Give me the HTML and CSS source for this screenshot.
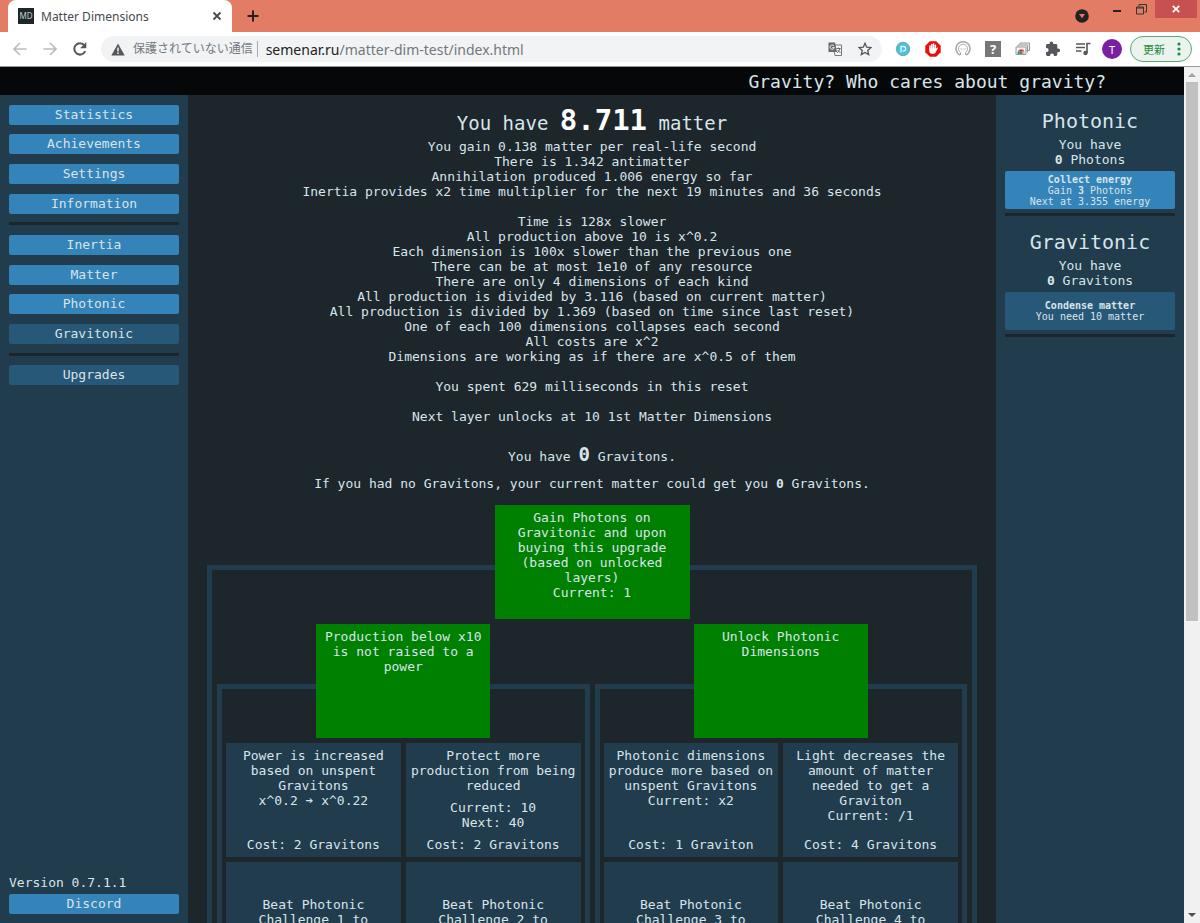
FILE: index.html
```html
<!DOCTYPE html>
<html lang="en">
<head>
  <meta charset="UTF-8">
  <meta name="viewport" content="width=device-width, initial-scale=1.0">
  <title>Matter Dimensions</title>
  <link rel="stylesheet" href="styles.css">
</head>
<body>
  <!-- Browser window -->
  <div class="tab-strip">
    <div class="tab">
      <span class="favicon">MD</span>
      <span class="tab-title">Matter Dimensions</span>
      <button class="icon-btn" aria-label="Close tab">
        <svg width="10" height="10" viewBox="0 0 10 10"><path d="M1.5 1.5l7 7M8.5 1.5l-7 7" stroke="#45494d" stroke-width="1.8"/></svg>
      </button>
    </div>
    <button class="icon-btn new-tab" aria-label="New tab">
      <svg width="12" height="12" viewBox="0 0 12 12"><path d="M6 0.5v11M0.5 6h11" stroke="#222" stroke-width="2"/></svg>
    </button>
    <div class="window-controls">
      <button class="icon-btn tab-search" aria-label="Search tabs">
        <svg width="14" height="14" viewBox="0 0 14 14"><circle cx="7" cy="7" r="6.8" fill="#222"/><path d="M4 5h6L7 9.200z" fill="#e27c64"/></svg>
      </button>
      <button class="icon-btn window-btn" aria-label="Minimize">
        <svg width="10" height="10" viewBox="0 0 10 10"><path d="M1 7h8" stroke="#222" stroke-width="2"/></svg>
      </button>
      <button class="icon-btn window-btn" aria-label="Restore">
        <svg width="11" height="11" viewBox="0 0 11 11" fill="none" stroke="#333"><path d="M3 2.5V.5h7.5V8H8.5"/><path d="M.5 3h7v7h-7zM.5 4h7"/></svg>
      </button>
      <button class="icon-btn window-close" aria-label="Close">
        <svg width="8" height="8" viewBox="0 0 8 8"><path d="M.8.8l6.4 6.4M7.2.8L.8 7.2" stroke="#fff" stroke-width="1.7"/></svg>
      </button>
    </div>
  </div>

  <div class="toolbar">
    <div class="nav-buttons">
      <button class="icon-btn" aria-label="Back">
        <svg width="16" height="16" viewBox="0 0 16 16" fill="none" stroke="#babcbe" stroke-width="1.7"><path d="M14.5 8H2.5M8 2L2 8l6 6"/></svg>
      </button>
      <button class="icon-btn" aria-label="Forward">
        <svg width="16" height="16" viewBox="0 0 16 16" fill="none" stroke="#babcbe" stroke-width="1.7"><path d="M1.5 8h12M8 2l6 6-6 6"/></svg>
      </button>
      <button class="icon-btn" aria-label="Reload">
        <svg width="16" height="16" viewBox="0 0 16 16"><path d="M13.2 10.2A5.7 5.7 0 1 1 12.4 4.3" fill="none" stroke="#54575b" stroke-width="2"/><path d="M14.3 1v6.2H8.1z" fill="#54575b"/></svg>
      </button>
    </div>
    <div class="omnibox">
      <svg width="14" height="13" viewBox="0 0 14 13"><path d="M7 .5L13.7 12.5H.3z" fill="#54575b"/><path d="M7 4.5v4M7 9.6v1.5" stroke="#f1f3f4" stroke-width="1.5"/></svg>
      <span class="insecure">保護されていない通信</span>
      <span class="url"><span class="host">semenar.ru</span>/matter-dim-test/index.html</span>
      <button class="icon-btn" aria-label="Translate">
        <svg width="14" height="14" viewBox="0 0 14 14"><path d="M5 3h8.5v10.500H7z" fill="#f8f9fa" stroke="#777"/><path d="M.5.5h6.500l2 9.500H.5z" fill="#666a6d"/><path d="M6 4a2.100 2.100 0 1 0 .3 1.600H4.400" fill="none" stroke="#fff"/><path d="M8.500 6.500h4M10.500 5.500v1M12 6.500q-1 3-3 4.500M9.500 8l3 3" fill="none" stroke="#666a6d"/></svg>
      </button>
      <button class="icon-btn" aria-label="Bookmark">
        <svg width="14" height="14" viewBox="0 0 14 14"><path d="M7 1.300l1.700 3.900 4.200.4-3.200 2.800 1 4.200L7 10.400l-3.700 2.200 1-4.200L1.100 5.600l4.200-.4z" fill="none" stroke="#54575b" stroke-width="1.300"/></svg>
      </button>
    </div>
    <div class="extensions">
      <button class="icon-btn" aria-label="Pushbullet">
        <svg width="16" height="16" viewBox="0 0 16 16"><circle cx="8" cy="8" r="6.700" fill="#42c3e0" stroke="#8b9da3"/><path d="M6 11.500V5.500h2.500a2.200 2.200 0 0 1 0 4.400H7.500" fill="none" stroke="#e6f9fd" stroke-width="1.300"/></svg>
      </button>
      <button class="icon-btn" aria-label="Blocker">
        <svg width="16" height="16" viewBox="0 0 16 16"><path d="M4.800.3h6.400l4.500 4.500v6.400l-4.500 4.500H4.800L.3 11.200V4.800z" fill="#e8100c"/><path d="M5 9V5M6.800 8V3.500M8.600 8V3M10.400 8V4.200" stroke="#fff" stroke-width="1.500" stroke-linecap="round"/><path d="M4.400 7.500h6.600l1.500-1q.8.200.2 1l-2.200 4.300q-.6 1-2 1H7q-2.600 0-2.600-2.800z" fill="#fff"/></svg>
      </button>
      <button class="icon-btn" aria-label="Extension">
        <svg width="16" height="16" viewBox="0 0 16 16" fill="none"><path d="M5 14A7 7 0 1 1 11 14" stroke="#aaa" stroke-width="1.600"/><path d="M5.500 11.500a4.500 4.500 0 1 1 5 0v2.500M5.500 11.500V14" stroke="#aaa"/><path d="M5.500 8h1.200M7.500 8h1M9.500 8h1.200" stroke="#aaa"/></svg>
      </button>
      <button class="icon-btn" aria-label="Help"><span class="help">?</span></button>
      <button class="icon-btn" aria-label="Images">
        <svg width="16" height="16" viewBox="0 0 16 16"><path d="M5 3.500V2h9.500v7.500h-1.500" fill="#eee" stroke="#999"/><path d="M3 5.500V4h9.500v7.500" fill="#eee" stroke="#999"/><path d="M1 6h10v7.500H1z" fill="#f5f5f5" stroke="#999"/><path d="M2.500 13a4 4 0 0 1 1-3.500L6 13z" fill="#2da94f"/><path d="M3 10.500a3.500 3.500 0 0 1 6.500 0z" fill="#e33b2e"/><path d="M9 10.500a4 4 0 0 1 .5 2.500H6z" fill="#fdbd00"/><circle cx="6" cy="11.500" r="1.500" fill="#3b78e7"/></svg>
      </button>
      <button class="icon-btn" aria-label="Extensions">
        <svg width="16" height="16" viewBox="0 0 16 16"><path d="M13.300 7.600h-1V4.400c0-.8-.6-1.400-1.400-1.400H8.200V2.300a1.800 1.800 0 0 0-3.600 0V3H2.400C1.600 3 1 3.600 1 4.400v2.700h.7a1.900 1.900 0 0 1 0 3.800H1v2.700c0 .8.600 1.400 1.400 1.400h2.700v-.7a1.900 1.900 0 0 1 3.800 0v.7h2c.8 0 1.400-.6 1.400-1.400v-2.400h1a1.800 1.800 0 0 0 0-3.600z" fill="#54575b"/></svg>
      </button>
      <button class="icon-btn" aria-label="Media">
        <svg width="16" height="16" viewBox="0 0 16 16"><path d="M1 3h9M1 6.500h9M1 10h5.500" stroke="#54575b" stroke-width="1.500"/><path d="M12 12V2.500h3.500" fill="none" stroke="#54575b" stroke-width="1.600"/><circle cx="10.500" cy="12" r="2.200" fill="#54575b"/></svg>
      </button>
    </div>
    <button class="icon-btn avatar" aria-label="Profile">T</button>
    <button class="update">更新
      <svg width="4" height="14" viewBox="0 0 4 14" fill="#1e8e3e"><circle cx="2" cy="2" r="1.600"/><circle cx="2" cy="7" r="1.600"/><circle cx="2" cy="12" r="1.600"/></svg>
    </button>
  </div>

  <!-- Game -->
  <div class="viewport">
    <div class="game">
      <div class="news">Gravity? Who cares about gravity?</div>
      <div class="columns">
        <nav class="sidebar">
          <button class="menu-btn">Statistics</button>
          <button class="menu-btn">Achievements</button>
          <button class="menu-btn">Settings</button>
          <button class="menu-btn">Information</button>
          <hr class="divider">
          <button class="menu-btn">Inertia</button>
          <button class="menu-btn">Matter</button>
          <button class="menu-btn">Photonic</button>
          <button class="menu-btn selected">Gravitonic</button>
          <hr class="divider">
          <button class="menu-btn selected">Upgrades</button>
          <div class="version">
            Version 0.7.1.1
            <button class="menu-btn">Discord</button>
          </div>
        </nav>

        <main class="content">
          <h1 class="matter">You have <b>8.711</b> matter</h1>
          <p>You gain 0.138 matter per real-life second<br>
            There is 1.342 antimatter<br>
            Annihilation produced 1.006 energy so far<br>
            Inertia provides x2 time multiplier for the next 19 minutes and 36 seconds</p>
          <p>Time is 128x slower<br>
            All production above 10 is x^0.2<br>
            Each dimension is 100x slower than the previous one<br>
            There can be at most 1e10 of any resource<br>
            There are only 4 dimensions of each kind<br>
            All production is divided by 3.116 (based on current matter)<br>
            All production is divided by 1.369 (based on time since last reset)<br>
            One of each 100 dimensions collapses each second<br>
            All costs are x^2<br>
            Dimensions are working as if there are x^0.5 of them</p>
          <p>You spent 629 milliseconds in this reset</p>
          <p>Next layer unlocks at 10 1st Matter Dimensions</p>
          <div class="gravitons">You have <b>0</b> Gravitons.</div>
          <div class="potential">If you had no Gravitons, your current matter could get you <b>0</b> Gravitons.</div>

          <div class="branch root">
            <button class="upgrade bought">
              <span>Gain Photons on Gravitonic and upon buying this upgrade (based on unlocked layers)<br>Current: 1</span>
            </button>
            <div class="split">
              <div class="branch">
                <button class="upgrade bought">
                  <span>Production below x10 is not raised to a power</span>
                </button>
                <div class="cards">
                  <button class="upgrade">
                    <span>Power is increased based on unspent Gravitons<br>x^0.2 <b>➔</b> x^0.22</span>
                    <span>Cost: 2 Gravitons</span>
                  </button>
                  <button class="upgrade">
                    <span>Protect more production from being reduced</span>
                    <span>Current: 10<br>Next: 40</span>
                    <span>Cost: 2 Gravitons</span>
                  </button>
                  <button class="upgrade locked">Beat Photonic Challenge 1 to</button>
                  <button class="upgrade locked">Beat Photonic Challenge 2 to</button>
                </div>
              </div>
              <div class="branch">
                <button class="upgrade bought">
                  <span>Unlock Photonic Dimensions</span>
                </button>
                <div class="cards">
                  <button class="upgrade">
                    <span>Photonic dimensions produce more based on unspent Gravitons<br>Current: x2</span>
                    <span>Cost: 1 Graviton</span>
                  </button>
                  <button class="upgrade">
                    <span>Light decreases the amount of matter needed to get a Graviton<br>Current: /1</span>
                    <span>Cost: 4 Gravitons</span>
                  </button>
                  <button class="upgrade locked">Beat Photonic Challenge 3 to</button>
                  <button class="upgrade locked">Beat Photonic Challenge 4 to</button>
                </div>
              </div>
            </div>
          </div>
        </main>

        <aside class="resets">
          <section class="reset">
            <h2>Photonic</h2>
            <p>You have<br><b>0</b> Photons</p>
            <button class="reset-btn"><b>Collect energy</b><span>Gain <b>3</b> Photons</span><span>Next at 3.355 energy</span></button>
            <hr class="divider">
          </section>
          <section class="reset">
            <h2>Gravitonic</h2>
            <p>You have<br><b>0</b> Gravitons</p>
            <button class="reset-btn unavailable"><b>Condense matter</b><span>You need 10 matter</span></button>
            <hr class="divider">
          </section>
        </aside>
      </div>
    </div>
    <div class="scrollbar">
      <span class="arrow up"></span>
      <span class="thumb"></span>
      <span class="arrow down"></span>
    </div>
  </div>
</body>
</html>
```
FILE: styles.css
```css
:root {
  --bg: #1c262b;
  --panel: #203c4d;
  --accent: #3483b9;
  --accent-dim: #285877;
  --bought: #008000;
  --text: #d8e4ea;
  --frame: #e27c64;
}

* {
  box-sizing: border-box;
}

body {
  display: flex;
  flex-direction: column;
  height: 100vh;
  margin: 0;
  overflow: hidden;
  font-family: 'Noto Sans', 'Noto Sans CJK JP', sans-serif;
}

button {
  border: none;
  padding: 0;
  font: inherit;
  color: inherit;
  cursor: pointer;
}

svg {
  display: block;
  flex: none;
}

.icon-btn {
  display: flex;
  align-items: center;
  justify-content: center;
  flex: none;
  background: none;
}

/* Tab strip */
.tab-strip {
  display: flex;
  flex: none;
  height: 32px;
  padding-left: 8px;
  background: var(--frame);
}

.tab {
  display: flex;
  align-items: center;
  width: 224px;
  padding: 0 10px;
  border-radius: 8px 8px 0 0;
  background: #fff;
}

.favicon {
  width: 16px;
  margin-right: 7px;
  background: var(--bg);
  color: #ccc;
  font-size: 8px;
  line-height: 16px;
  text-align: center;
}

.tab-title {
  flex: 1;
  color: #45494d;
  font-size: 12px;
}

.new-tab {
  width: 42px;
}

.window-controls {
  display: flex;
  align-items: flex-start;
  margin-left: auto;
}

.tab-search {
  height: 32px;
  margin-right: 16px;
}

.window-btn {
  width: 24px;
  height: 18px;
}

.window-close {
  width: 42px;
  height: 18px;
  margin: 0 3px 0 2px;
  background: #c75050;
}

/* Toolbar */
.toolbar {
  display: flex;
  align-items: center;
  flex: none;
  height: 35px;
  padding: 0 8px 0 12px;
  border-bottom: 1px solid #999;
  background: #fff;
}

.nav-buttons {
  display: flex;
  gap: 14px;
  margin-right: 13px;
}

.omnibox {
  display: flex;
  align-items: center;
  flex: 1;
  height: 26px;
  padding: 0 10px;
  border-radius: 13px;
  background: #f1f3f4;
  color: #74787c;
  font-size: 14px;
}

.insecure {
  margin-left: 8px;
  padding-right: 4px;
  border-right: 1px solid #aaa;
  font-size: 12px;
  line-height: 16px;
}

.url {
  flex: 1;
  margin-left: 8px;
}

.host {
  color: #222;
}

.omnibox .icon-btn {
  margin-left: 16px;
}

.extensions {
  display: flex;
  align-items: center;
  gap: 14px;
  margin: 0 11px 0 13px;
}

.help {
  width: 16px;
  background: #777;
  color: #fff;
  font-size: 13px;
  font-weight: bold;
  line-height: 16px;
}

.avatar {
  width: 20px;
  height: 20px;
  margin-right: 8px;
  border-radius: 50%;
  background: #7b1fa2;
  color: #fff;
  font-size: 11px;
}

.update {
  display: flex;
  align-items: center;
  justify-content: space-between;
  width: 62px;
  height: 26px;
  padding: 0 10px 0 12px;
  border: 1px solid #5aa873;
  border-radius: 13px;
  background: #eaf3ed;
  color: #1e8e3e;
  font-size: 11px;
}

/* Page area */
.viewport {
  display: flex;
  flex: 1;
  min-height: 0;
}

.game {
  display: flex;
  flex-direction: column;
  flex: 1;
  min-width: 0;
  background: var(--bg);
  color: var(--text);
  font-family: 'DejaVu Sans Mono', monospace;
  font-size: 13px;
  line-height: 15px;
}

.news {
  flex: none;
  height: 28px;
  padding-right: 78px;
  background: #050709;
  font-size: 18px;
  line-height: 30px;
  text-align: right;
}

.columns {
  display: flex;
  flex: 1;
  min-height: 0;
}

/* Left menu */
.sidebar,
.resets {
  display: flex;
  flex-direction: column;
  flex: none;
  width: 188px;
  padding: 0 9px;
  background: var(--panel);
}

.menu-btn {
  flex: none;
  width: 100%;
  height: 20px;
  margin-top: 5.7%;
  border-radius: 2px;
  background: var(--accent);
  line-height: 20px;
}

.divider {
  flex: none;
  width: 100%;
  height: 3px;
  margin: 5% 0 0;
  border: none;
  background: var(--bg);
}

.menu-btn.selected {
  background: var(--accent-dim);
}

.version {
  margin-top: auto;
  padding-bottom: 9px;
}

.version .menu-btn {
  margin-top: 4px;
}

/* Center column */
.content {
  flex: 1;
  padding: 0 19px;
  overflow: hidden;
  text-align: center;
}

.content p {
  margin: 0 0 15px;
}

.matter {
  margin: 0;
  padding-top: 9px;
  font-size: 19px;
  font-weight: normal;
  line-height: 32px;
}

.matter b {
  color: #fff;
  font-size: 29px;
}

.gravitons {
  line-height: 30px;
}

.gravitons b {
  font-size: 19px;
}

.potential {
  padding: 4px 0 14px;
}

/* Upgrade tree */
.branch {
  flex: 1;
  margin-top: 60px;
  padding: 0 4px;
  border: 5px solid var(--panel);
}

.root {
  padding: 0 5px;
}

.split {
  display: flex;
  gap: 5px;
}

.cards {
  display: grid;
  grid-template-columns: 1fr 1fr;
  gap: 5px;
}

.upgrade {
  display: flex;
  flex-direction: column;
  justify-content: space-between;
  align-items: center;
  height: 114px;
  padding: 5px 4px;
  background: var(--panel);
}

.upgrade.bought {
  justify-content: flex-start;
  width: 49%;
  margin: -65px auto 5px;
  background: var(--bought);
}

.root > .upgrade.bought {
  width: 26%;
  padding: 5px 16px;
}

.upgrade.locked {
  justify-content: flex-start;
  padding: 35px 16px 0;
}

/* Right column */
.resets {
  text-align: center;
}

.reset h2 {
  margin: 14px 0 4px;
  font-size: 20px;
  font-weight: normal;
  line-height: 24px;
}

.reset p {
  margin: 0;
}

.reset-btn {
  display: flex;
  flex-direction: column;
  justify-content: center;
  width: 100%;
  height: 38px;
  margin: 4px 0;
  border-radius: 2px;
  background: var(--accent);
  font-size: 10px;
  line-height: 11px;
}

.reset-btn.unavailable {
  background: var(--accent-dim);
}

.reset .divider {
  margin: 0;
}

/* Scrollbar */
.scrollbar {
  display: flex;
  flex-direction: column;
  align-items: center;
  flex: none;
  width: 16px;
  background: #f1f1f1;
}

.arrow {
  margin: 6px 0;
  border: 4px solid transparent;
}

.arrow.up {
  margin: 2px 0 5px;
  border-bottom: 4px solid #a0a0a0;
}

.arrow.down {
  margin: auto 0 2px;
  border-top: 4px solid #505050;
}

.thumb {
  width: 12px;
  height: 63%;
  background: #c1c1c1;
}
```
